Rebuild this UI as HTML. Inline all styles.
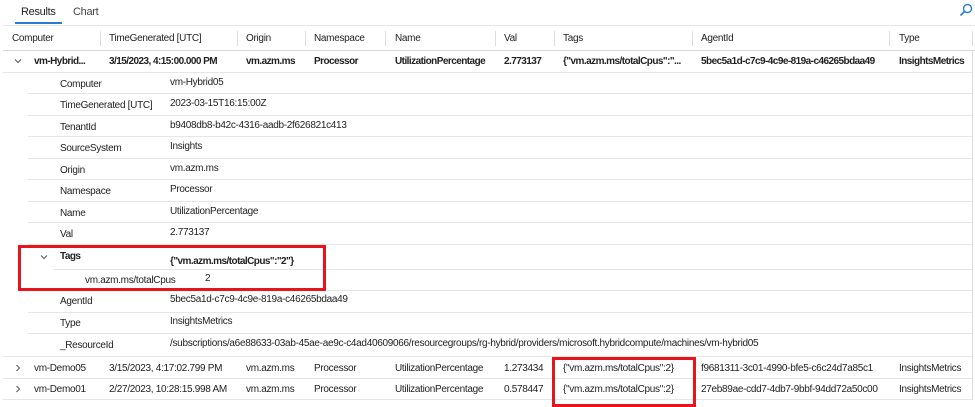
<!DOCTYPE html>
<html><head><meta charset="utf-8"><style>
body{margin:0;width:975px;height:406px;background:#fff;font-family:"Liberation Sans",sans-serif;font-size:10px;letter-spacing:-0.3px;color:#222;position:relative;overflow:hidden}
.a{position:absolute;white-space:nowrap}
.b{font-weight:bold;letter-spacing:-0.55px}
.hl{position:absolute;height:1px;background:#e6e6e6}
.vs{position:absolute;width:1px;background:#ddd;top:31px;height:15px}
</style></head><body>
<div class="a" style="left:21px;top:6px;font-size:11px;color:#222">Results</div>
<div class="a" style="left:73px;top:6px;font-size:11px;color:#444">Chart</div>
<div style="position:absolute;left:15px;top:22px;width:47px;height:2px;background:#2b7bd0"></div>
<div class="hl" style="left:3px;top:25px;width:972px;background:#e8e8e8"></div>
<svg class="a" style="left:959px;top:3px" width="14" height="14" viewBox="0 0 14 14"><circle cx="8.5" cy="5.5" r="4" fill="none" stroke="#2b7bd0" stroke-width="1.4"/><path d="M5.5 8.5L1.5 12.5" stroke="#2b7bd0" stroke-width="1.6"/></svg>
<div class="a" style="left:12px;top:33px">Computer</div>
<div class="a" style="left:109px;top:33px">TimeGenerated [UTC]</div>
<div class="a" style="left:246px;top:33px">Origin</div>
<div class="a" style="left:314px;top:33px">Namespace</div>
<div class="a" style="left:395px;top:33px">Name</div>
<div class="a" style="left:504px;top:33px">Val</div>
<div class="a" style="left:563px;top:33px">Tags</div>
<div class="a" style="left:701px;top:33px">AgentId</div>
<div class="a" style="left:899px;top:33px">Type</div>
<div class="vs" style="left:100px"></div><div class="vs" style="left:237px"></div><div class="vs" style="left:305px"></div><div class="vs" style="left:385px"></div><div class="vs" style="left:495px"></div><div class="vs" style="left:554px"></div><div class="vs" style="left:692px"></div><div class="vs" style="left:889px"></div><div class="vs" style="left:972px"></div>
<div class="hl" style="left:3px;top:50px;width:972px;background:#d8d8d8"></div>
<div style="position:absolute;left:972px;top:50px;width:1px;height:350px;background:#ddd"></div>
<svg class="a" style="left:14px;top:58px" width="8" height="6"><path d="M1 1.5L4 4.5L7 1.5" fill="none" stroke="#555" stroke-width="1"/></svg>
<div class="a b" style="left:34px;top:56px">vm-Hybrid...</div>
<div class="a b" style="left:109px;top:56px">3/15/2023, 4:15:00.000 PM</div>
<div class="a b" style="left:246px;top:56px">vm.azm.ms</div>
<div class="a b" style="left:314px;top:56px">Processor</div>
<div class="a b" style="left:395px;top:56px">UtilizationPercentage</div>
<div class="a b" style="left:504px;top:56px">2.773137</div>
<div class="a b" style="left:563px;top:56px">{"vm.azm.ms/totalCpus":"...</div>
<div class="a b" style="left:701px;top:56px">5bec5a1d-c7c9-4c9e-819a-c46265bdaa49</div>
<div class="a b" style="left:899px;top:56px">InsightsMetrics</div>
<div class="hl" style="left:3px;top:72px;width:970px"></div>
<div class="a" style="left:60px;top:79px">Computer</div><div class="a" style="left:170px;top:77px">vm-Hybrid05</div>
<div class="hl" style="left:28px;top:93px;width:945px"></div>
<div class="a" style="left:60px;top:100px">TimeGenerated [UTC]</div><div class="a" style="left:170px;top:98px">2023-03-15T16:15:00Z</div>
<div class="hl" style="left:28px;top:115px;width:945px"></div>
<div class="a" style="left:60px;top:122px">TenantId</div><div class="a" style="left:170px;top:120px">b9408db8-b42c-4316-aadb-2f626821c413</div>
<div class="hl" style="left:28px;top:136px;width:945px"></div>
<div class="a" style="left:60px;top:143px">SourceSystem</div><div class="a" style="left:170px;top:141px">Insights</div>
<div class="hl" style="left:28px;top:158px;width:945px"></div>
<div class="a" style="left:60px;top:165px">Origin</div><div class="a" style="left:170px;top:163px">vm.azm.ms</div>
<div class="hl" style="left:28px;top:179px;width:945px"></div>
<div class="a" style="left:60px;top:186px">Namespace</div><div class="a" style="left:170px;top:184px">Processor</div>
<div class="hl" style="left:28px;top:201px;width:945px"></div>
<div class="a" style="left:60px;top:208px">Name</div><div class="a" style="left:170px;top:206px">UtilizationPercentage</div>
<div class="hl" style="left:28px;top:222px;width:945px"></div>
<div class="a" style="left:60px;top:229px">Val</div><div class="a" style="left:170px;top:227px">2.773137</div>
<div class="hl" style="left:28px;top:244px;width:945px"></div>
<svg class="a" style="left:40px;top:254px" width="8" height="6"><path d="M1 1.5L4 4.5L7 1.5" fill="none" stroke="#555" stroke-width="1"/></svg>
<div class="a b" style="left:60px;top:251px">Tags</div><div class="a b" style="left:170px;top:256px">{"vm.azm.ms/totalCpus":"2"}</div>
<div class="hl" style="left:53px;top:269px;width:920px"></div>
<div class="a" style="left:85px;top:275px">vm.azm.ms/totalCpus</div><div class="a" style="left:205px;top:273px">2</div>
<div class="hl" style="left:28px;top:290px;width:945px"></div>
<div class="a" style="left:60px;top:296px">AgentId</div><div class="a" style="left:170px;top:294px">5bec5a1d-c7c9-4c9e-819a-c46265bdaa49</div>
<div class="hl" style="left:28px;top:312px;width:945px"></div>
<div class="a" style="left:60px;top:318px">Type</div><div class="a" style="left:170px;top:316px">InsightsMetrics</div>
<div class="hl" style="left:28px;top:333px;width:945px"></div>
<div class="a" style="left:60px;top:340px">_ResourceId</div><div class="a" style="left:170px;top:338px">/subscriptions/a6e88633-03ab-45ae-ae9c-c4ad40609066/resourcegroups/rg-hybrid/providers/microsoft.hybridcompute/machines/vm-hybrid05</div>
<div class="hl" style="left:3px;top:356px;width:970px"></div>
<svg class="a" style="left:15px;top:364px" width="6" height="8"><path d="M1.5 1L4.5 4L1.5 7" fill="none" stroke="#555" stroke-width="1"/></svg>
<div class="a" style="left:34px;top:363px">vm-Demo05</div><div class="a" style="left:109px;top:363px">3/15/2023, 4:17:02.799 PM</div><div class="a" style="left:246px;top:363px">vm.azm.ms</div><div class="a" style="left:314px;top:363px">Processor</div><div class="a" style="left:395px;top:363px">UtilizationPercentage</div><div class="a" style="left:504px;top:363px">1.273434</div><div class="a" style="left:563px;top:363px">{"vm.azm.ms/totalCpus":2}</div><div class="a" style="left:701px;top:363px">f9681311-3c01-4990-bfe5-c6c24d7a85c1</div><div class="a" style="left:899px;top:363px">InsightsMetrics</div>
<div class="hl" style="left:3px;top:378px;width:970px"></div>
<svg class="a" style="left:15px;top:385px" width="6" height="8"><path d="M1.5 1L4.5 4L1.5 7" fill="none" stroke="#555" stroke-width="1"/></svg>
<div class="a" style="left:34px;top:384px">vm-Demo01</div><div class="a" style="left:109px;top:384px">2/27/2023, 10:28:15.998 AM</div><div class="a" style="left:246px;top:384px">vm.azm.ms</div><div class="a" style="left:314px;top:384px">Processor</div><div class="a" style="left:395px;top:384px">UtilizationPercentage</div><div class="a" style="left:504px;top:384px">0.578447</div><div class="a" style="left:563px;top:384px">{"vm.azm.ms/totalCpus":2}</div><div class="a" style="left:701px;top:384px">27eb89ae-cdd7-4db7-9bbf-94dd72a50c00</div><div class="a" style="left:899px;top:384px">InsightsMetrics</div>
<div class="hl" style="left:3px;top:399px;width:970px"></div>
<div style="position:absolute;left:18px;top:245px;width:302px;height:40px;border:3px solid #e8141c"></div>
<div style="position:absolute;left:552px;top:357px;width:138px;height:44px;border:3px solid #e8141c"></div>
</body></html>
